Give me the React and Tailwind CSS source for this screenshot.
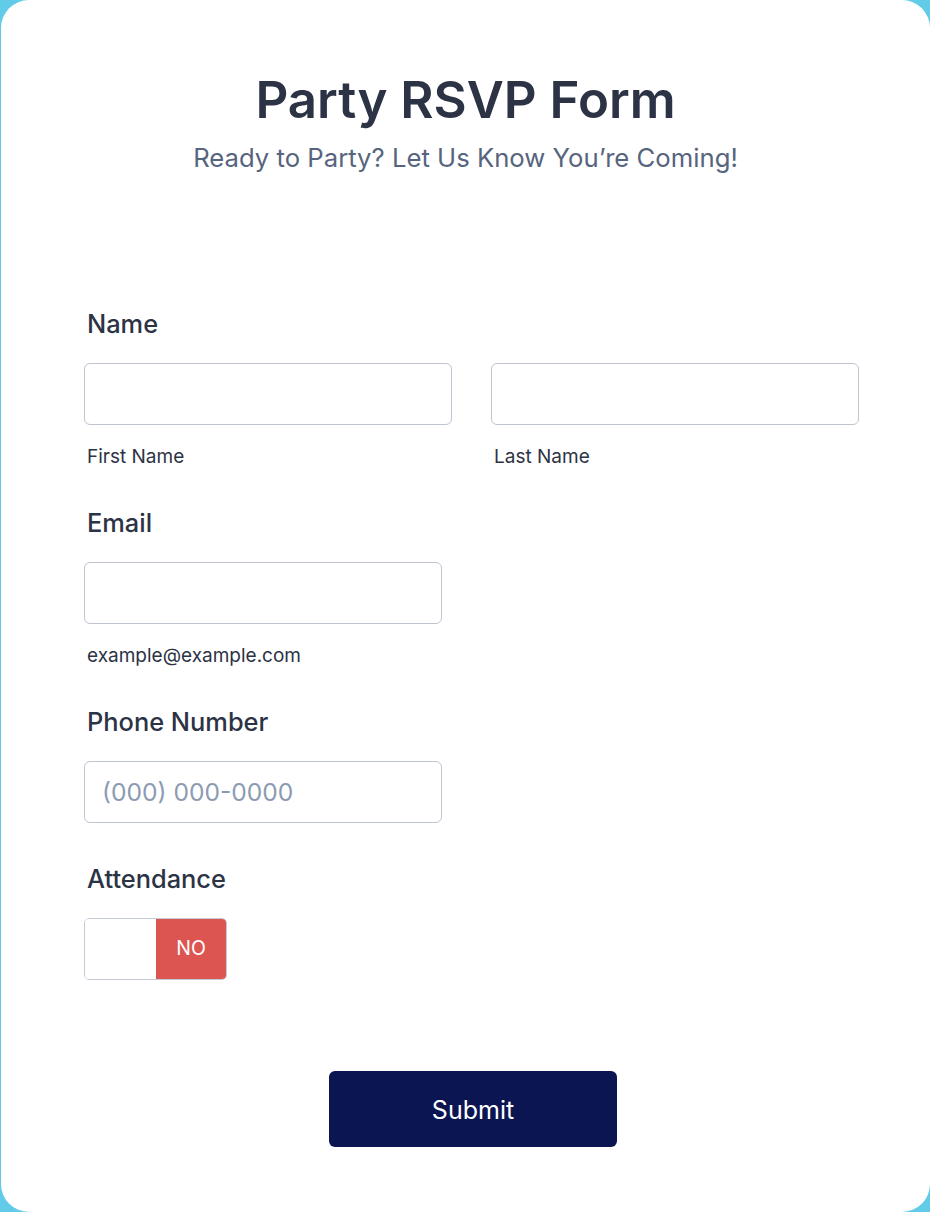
import React from "react";

export default function App() {
  const font = { fontFamily: "Inter, 'Noto Sans', sans-serif" };
  return (
    <div className="w-[930px] h-[1212px] bg-[#62cbe7] overflow-hidden" style={font}>
      <div className="ml-[1px] w-[929px] h-[1212px] bg-white rounded-[28px] pl-[83px] pr-[71px] flex flex-col">
        <h1 className="mt-[70px] h-[60px] leading-[60px] text-center text-[51px] font-semibold text-[#2c3345] ml-[-83px] mr-[-71px]">
          Party RSVP Form
        </h1>
        <p className="mt-[13px] h-[30px] leading-[30px] text-center text-[25.7px] text-[#57647e] ml-[-83px] mr-[-71px]">
          Ready to Party? Let Us Know You’re Coming!
        </p>

        <label className="mt-[136px] h-[30px] leading-[30px] pl-[3px] text-[25.4px] font-medium text-[#2c3345]">Name</label>
        <div className="mt-[24px] grid grid-cols-2 gap-[39px]">
          <div className="flex flex-col">
            <input className="h-[62px] border border-[#bec4d0] rounded-[6px] bg-white outline-none" />
            <span className="mt-[20px] h-[24px] leading-[24px] pl-[3px] text-[19px] text-[#2c3345]">First Name</span>
          </div>
          <div className="flex flex-col">
            <input className="h-[62px] border border-[#bec4d0] rounded-[6px] bg-white outline-none" />
            <span className="mt-[20px] h-[24px] leading-[24px] pl-[3px] text-[19px] text-[#2c3345]">Last Name</span>
          </div>
        </div>

        <label className="mt-[39px] h-[30px] leading-[30px] pl-[3px] text-[25.4px] font-medium text-[#2c3345]">Email</label>
        <input className="mt-[24px] w-[358px] h-[62px] border border-[#bec4d0] rounded-[6px] bg-white outline-none" />
        <span className="mt-[20px] h-[24px] leading-[24px] pl-[3px] text-[19px] text-[#2c3345]">example@example.com</span>

        <label className="mt-[39px] h-[30px] leading-[30px] pl-[3px] text-[25.4px] font-medium text-[#2c3345]">Phone Number</label>
        <input
          placeholder="(000) 000-0000"
          className="mt-[24px] w-[358px] h-[62px] border border-[#bec4d0] rounded-[6px] bg-white outline-none pl-[17px] pr-[16px] text-[24.6px] text-[#2c3345] placeholder:text-[#8c9bb3]"
        />

        <label className="mt-[41px] h-[30px] leading-[30px] pl-[3px] text-[25.4px] font-medium text-[#2c3345]">Attendance</label>
        <div className="mt-[24px] w-[143px] h-[62px] border border-[#c4cbd7] rounded-[5px] flex overflow-hidden">
          <div className="w-[71px] bg-white"></div>
          <div className="flex-1 bg-[#dc5551] flex items-center justify-center text-white text-[19.5px]">NO</div>
        </div>

        <button className="mt-[91px] ml-[245px] w-[288px] h-[76px] pt-[3px] bg-[#0b1551] rounded-[6px] text-white text-[25px]">
          Submit
        </button>
      </div>
    </div>
  );
}
